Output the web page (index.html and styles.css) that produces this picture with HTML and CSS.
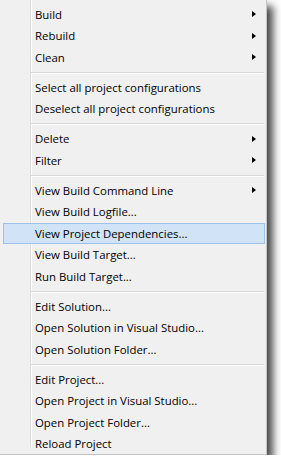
FILE: index.html
```html
<!DOCTYPE html>
<html>
<head>
<meta charset="utf-8">
<link rel="stylesheet" href="styles.css">
</head>
<body>
<div class="menu">
  <div class="item">Build<span class="arrow"></span></div>
  <div class="item">Rebuild<span class="arrow"></span></div>
  <div class="item">Clean<span class="arrow"></span></div>
  <div class="sep"></div>
  <div class="item">Select all project configurations</div>
  <div class="item">Deselect all project configurations</div>
  <div class="sep"></div>
  <div class="item">Delete<span class="arrow"></span></div>
  <div class="item">Filter<span class="arrow"></span></div>
  <div class="sep"></div>
  <div class="item">View Build Command Line<span class="arrow"></span></div>
  <div class="item">View Build Logfile...</div>
  <div class="item active">View Project Dependencies...</div>
  <div class="item">View Build Target...</div>
  <div class="item">Run Build Target...</div>
  <div class="sep"></div>
  <div class="item">Edit Solution...</div>
  <div class="item">Open Solution in Visual Studio...</div>
  <div class="item">Open Solution Folder...</div>
  <div class="sep"></div>
  <div class="item">Edit Project...</div>
  <div class="item">Open Project in Visual Studio...</div>
  <div class="item">Open Project Folder...</div>
  <div class="item">Reload Project</div>
</div>
</body>
</html>
```

FILE: styles.css
```css
html, body {
  margin: 0;
  padding: 0;
  background: #ffffff;
}

.menu {
  box-sizing: border-box;
  width: 267px;
  height: 455px;
  display: flex;
  flex-direction: column;
  padding: 3.5px 1px 0 3px;
  border-right: 1px solid #c4c4c4;
  border-bottom: 1px solid #c4c4c4;
  background:
    linear-gradient(to right, transparent 30px, #dcdcdc 30px, #dcdcdc 31px, #ffffff 31px, #ffffff 32px, transparent 32px) no-repeat 0 0 / 100% 447px,
    #f0f0f0;
  box-shadow: 6px 6px 8px rgba(0, 0, 0, 0.72);
  font-family: "Open Sans", "Noto Sans", sans-serif;
  font-size: 11.4px;
  color: #000;
}

.item {
  box-sizing: border-box;
  height: 21.5px;
  flex: none;
  display: flex;
  align-items: center;
  justify-content: space-between;
  padding: 0 8px 0 31px;
  border: 1px solid transparent;
  white-space: nowrap;
}

.item.active {
  background: #d1e3f6;
  border-color: #9dc1e8;
}

.arrow {
  width: 0;
  height: 0;
  border-left: 4px solid #000;
  border-top: 3.5px solid transparent;
  border-bottom: 3.5px solid transparent;
}

.sep {
  height: 8.5px;
  flex: none;
  margin: 0 1px 0 28px;
  display: flex;
  align-items: center;
}

.sep::before {
  content: "";
  display: block;
  width: 100%;
  height: 1px;
  background: #d7d7d7;
  box-shadow: 0 1px 0 #ffffff;
}
```
